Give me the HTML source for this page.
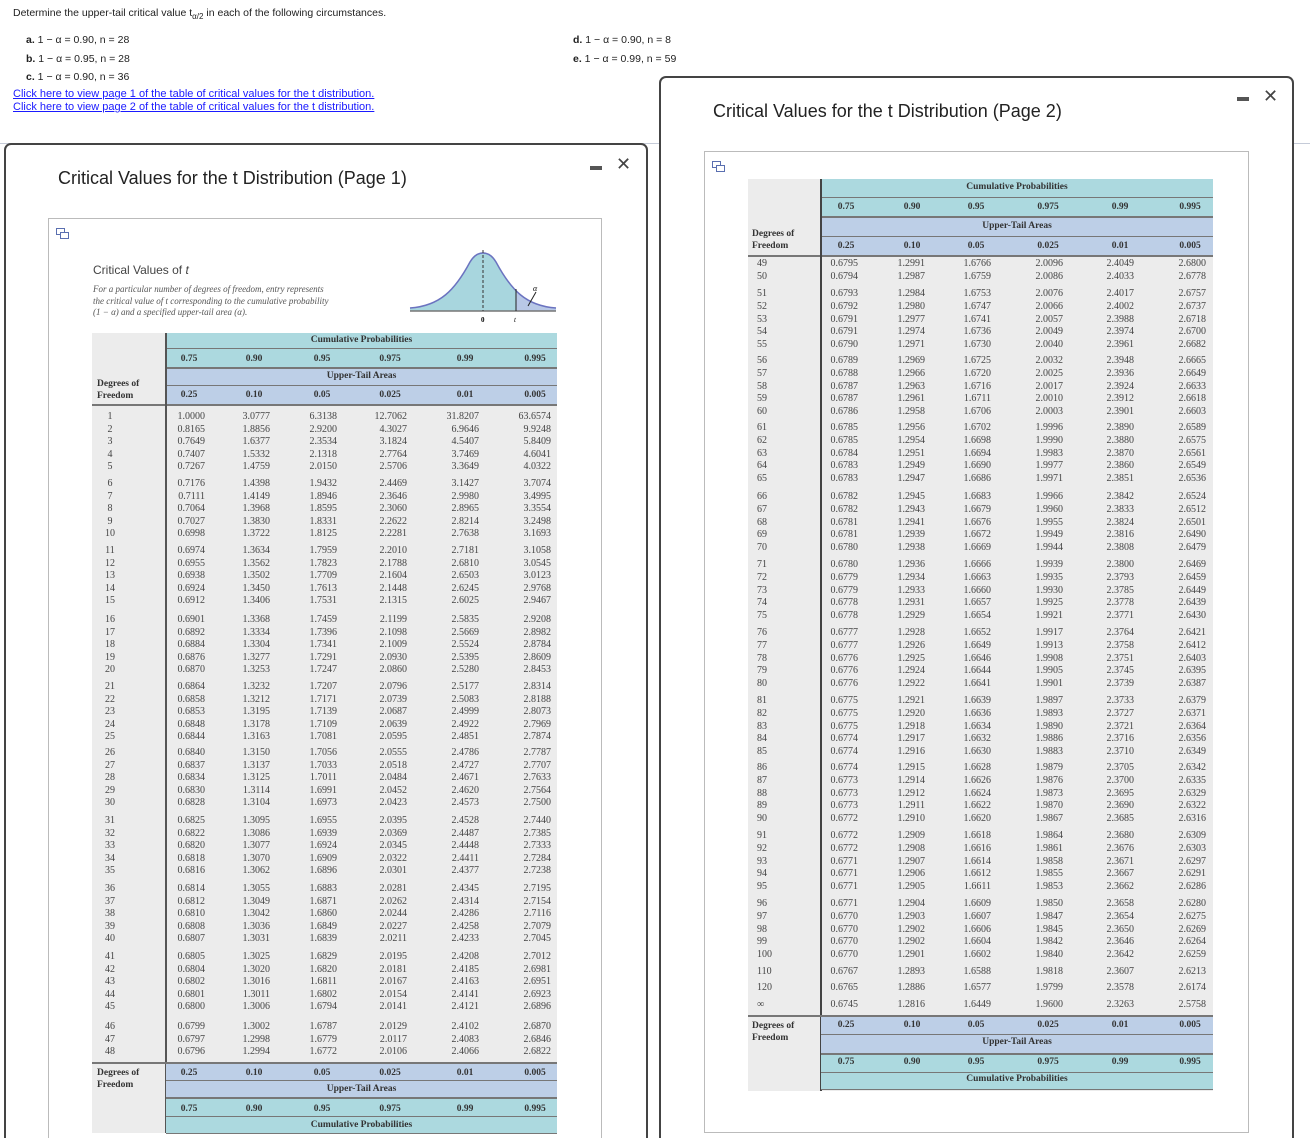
<!DOCTYPE html>
<html><head><meta charset="utf-8"><style>
*{margin:0;padding:0;box-sizing:border-box}
html{width:1310px;height:1138px;overflow:hidden}
body{width:1310px;height:1138px;overflow:hidden;background:#fff;position:relative;font-family:"Liberation Sans",sans-serif;color:#222}
.a{position:absolute}
.q{font-size:10.5px;white-space:nowrap}
.q b{font-weight:bold}
.lnk{color:#1a1aff;text-decoration:underline;font-size:11px}
.win{position:absolute;border:2px solid #444;border-bottom:0;border-radius:7px 7px 0 0;background:#fff}
.ttl{position:absolute;font-size:18px;color:#222;white-space:nowrap}
.ctl{position:absolute;font-size:18px;color:#444}
.ib{position:absolute;border:1px solid #bbb;background:#fff}
.ser{font-family:"Liberation Serif",serif;color:#333}
.band{position:absolute}
.teal{background:#acd9df}
.blu{background:#bdcfe7}
.hl{position:absolute;height:2px;background:#777}
.h{position:absolute;font-family:"Liberation Serif",serif;font-weight:bold;font-size:9.5px;color:#333;text-align:center;white-space:nowrap}
.g{position:absolute;font-family:"Liberation Serif",serif;font-size:10px;color:#444;line-height:12.55px}
.g div{display:flex;height:12.55px;white-space:nowrap}
.g i{font-style:normal;text-align:center;width:40px}
.g b{font-weight:normal;text-align:right}
.p1 b:nth-child(2){width:75px}.p1 b:nth-child(3){width:65px}.p1 b:nth-child(4){width:67px}.p1 b:nth-child(5){width:70px}.p1 b:nth-child(6){width:72px}.p1 b:nth-child(7){width:72px}
.p2{line-height:12.75px}.p2 div{height:12.75px}
.p2 i{width:73px;text-align:left;padding-left:9px}
.p2 b:nth-child(2){width:37px}.p2 b:nth-child(3){width:67px}.p2 b:nth-child(4){width:66px}.p2 b:nth-child(5){width:72px}.p2 b:nth-child(6){width:71px}.p2 b:nth-child(7){width:72px}
.ico{position:absolute;width:9px;height:7px;border:1.5px solid #5a6fb0}
.ico:after{content:"";position:absolute;left:3px;top:3px;width:7px;height:5px;border:1px solid #5a6fb0;background:#fff}
</style></head><body>

<div class="a q" style="left:13px;top:7px">Determine the upper-tail critical value t<sub style="font-size:8px">α/2</sub> in each of the following circumstances.</div>
<div class="a q" style="left:26px;top:34px"><b>a.</b> 1 − α = 0.90, n = 28</div>
<div class="a q" style="left:26px;top:53px"><b>b.</b> 1 − α = 0.95, n = 28</div>
<div class="a q" style="left:26px;top:71px"><b>c.</b> 1 − α = 0.90, n = 36</div>
<div class="a q" style="left:573px;top:34px"><b>d.</b> 1 − α = 0.90, n = 8</div>
<div class="a q" style="left:573px;top:53px"><b>e.</b> 1 − α = 0.99, n = 59</div>
<div class="a lnk" style="left:13px;top:88px">Click here to view page 1 of the table of critical values for the t distribution.</div>
<div class="a lnk" style="left:13px;top:101px">Click here to view page 2 of the table of critical values for the t distribution.</div>

<div class="a" style="left:0;top:143px;width:1310px;height:1px;background:#c5cbd8"></div>

<!-- Page 1 window -->
<div class="win" style="left:4px;top:143px;width:644px;height:995px"></div>
<div class="ttl" style="left:58px;top:168px">Critical Values for the t Distribution (Page 1)</div>
<div class="a" style="left:590px;top:166px;width:12px;height:4px;background:#555"></div>
<div class="ctl" style="left:616px;top:154px">✕</div>
<div class="ib" style="left:48px;top:218px;width:554px;height:920px;border-bottom:0"></div>
<div class="ico" style="left:56px;top:228px"></div>

<div class="a" style="left:93px;top:263px;font-size:12px;color:#444">Critical Values of <i>t</i></div>
<div class="a ser" style="left:93px;top:284px;font-size:9px;font-style:italic;line-height:11.5px;color:#555">For a particular number of degrees of freedom, entry represents<br>the critical value of t corresponding to the cumulative probability<br>(1 − α) and a specified upper-tail area (α).</div>
<svg class="a" style="left:405px;top:245px" width="160" height="85" viewBox="405 245 160 85">
<path d="M410 308 C440 306 455 290 470 262 C477 250 489 250 496 262 C511 290 526 306 556 308 L556 311 L410 311 Z" fill="#a8d6de"/>
<path d="M516 290 C528 302 540 307 556 308 L556 311 L516 311 Z" fill="#b8c8e6"/>
<path d="M410 308 C440 306 455 290 470 262 C477 250 489 250 496 262 C511 290 526 306 556 308" fill="none" stroke="#6b73c0" stroke-width="1.5"/>
<line x1="410" y1="311" x2="556" y2="311" stroke="#777" stroke-width="1.5"/>
<line x1="483" y1="250" x2="483" y2="311" stroke="#333" stroke-dasharray="3,2"/>
<line x1="516" y1="289" x2="516" y2="311" stroke="#222"/>
<line x1="528" y1="306" x2="536" y2="292" stroke="#222"/>
<text x="533" y="291" font-size="8" font-style="italic" font-family="Liberation Serif">α</text>
<text x="481" y="322" font-size="7" font-family="Liberation Serif" font-weight="bold">0</text>
<text x="514" y="322" font-size="7" font-style="italic" font-family="Liberation Serif">t</text>
</svg>

<div class="band" style="left:92px;top:333px;width:465px;height:800px;background:#ececec"></div>
<div class="band teal" style="left:166px;top:333px;width:391px;height:34px"></div>
<div class="band blu" style="left:166px;top:368px;width:391px;height:37px"></div>
<div class="hl" style="left:166px;top:348px;width:391px;height:1px"></div>
<div class="hl" style="left:166px;top:367px;width:391px"></div>
<div class="hl" style="left:166px;top:385px;width:391px;height:1px"></div>
<div class="hl" style="left:92px;top:404px;width:465px"></div>
<div class="a" style="left:165px;top:333px;width:2px;height:800px;background:#555"></div>
<div class="h" style="left:166px;top:335px;width:391px">Cumulative Probabilities</div>
<div class="h" style="left:166px;top:371px;width:391px">Upper-Tail Areas</div>
<div class="h" style="left:97px;top:378px;text-align:left;line-height:12px">Degrees of<br>Freedom</div>
<div class="h" style="left:159px;top:354px;width:60px">0.75</div><div class="h" style="left:224px;top:354px;width:60px">0.90</div><div class="h" style="left:292px;top:354px;width:60px">0.95</div><div class="h" style="left:360px;top:354px;width:60px">0.975</div><div class="h" style="left:435px;top:354px;width:60px">0.99</div><div class="h" style="left:505px;top:354px;width:60px">0.995</div>
<div class="h" style="left:159px;top:390px;width:60px">0.25</div><div class="h" style="left:224px;top:390px;width:60px">0.10</div><div class="h" style="left:292px;top:390px;width:60px">0.05</div><div class="h" style="left:360px;top:390px;width:60px">0.025</div><div class="h" style="left:435px;top:390px;width:60px">0.01</div><div class="h" style="left:505px;top:390px;width:60px">0.005</div>

<div class="g p1" style="left:90px;top:411px"><div><i>1</i><b>1.0000</b><b>3.0777</b><b>6.3138</b><b>12.7062</b><b>31.8207</b><b>63.6574</b></div><div><i>2</i><b>0.8165</b><b>1.8856</b><b>2.9200</b><b>4.3027</b><b>6.9646</b><b>9.9248</b></div><div><i>3</i><b>0.7649</b><b>1.6377</b><b>2.3534</b><b>3.1824</b><b>4.5407</b><b>5.8409</b></div><div><i>4</i><b>0.7407</b><b>1.5332</b><b>2.1318</b><b>2.7764</b><b>3.7469</b><b>4.6041</b></div><div><i>5</i><b>0.7267</b><b>1.4759</b><b>2.0150</b><b>2.5706</b><b>3.3649</b><b>4.0322</b></div></div>
<div class="g p1" style="left:90px;top:478px"><div><i>6</i><b>0.7176</b><b>1.4398</b><b>1.9432</b><b>2.4469</b><b>3.1427</b><b>3.7074</b></div><div><i>7</i><b>0.7111</b><b>1.4149</b><b>1.8946</b><b>2.3646</b><b>2.9980</b><b>3.4995</b></div><div><i>8</i><b>0.7064</b><b>1.3968</b><b>1.8595</b><b>2.3060</b><b>2.8965</b><b>3.3554</b></div><div><i>9</i><b>0.7027</b><b>1.3830</b><b>1.8331</b><b>2.2622</b><b>2.8214</b><b>3.2498</b></div><div><i>10</i><b>0.6998</b><b>1.3722</b><b>1.8125</b><b>2.2281</b><b>2.7638</b><b>3.1693</b></div></div>
<div class="g p1" style="left:90px;top:545px"><div><i>11</i><b>0.6974</b><b>1.3634</b><b>1.7959</b><b>2.2010</b><b>2.7181</b><b>3.1058</b></div><div><i>12</i><b>0.6955</b><b>1.3562</b><b>1.7823</b><b>2.1788</b><b>2.6810</b><b>3.0545</b></div><div><i>13</i><b>0.6938</b><b>1.3502</b><b>1.7709</b><b>2.1604</b><b>2.6503</b><b>3.0123</b></div><div><i>14</i><b>0.6924</b><b>1.3450</b><b>1.7613</b><b>2.1448</b><b>2.6245</b><b>2.9768</b></div><div><i>15</i><b>0.6912</b><b>1.3406</b><b>1.7531</b><b>2.1315</b><b>2.6025</b><b>2.9467</b></div></div>
<div class="g p1" style="left:90px;top:614px"><div><i>16</i><b>0.6901</b><b>1.3368</b><b>1.7459</b><b>2.1199</b><b>2.5835</b><b>2.9208</b></div><div><i>17</i><b>0.6892</b><b>1.3334</b><b>1.7396</b><b>2.1098</b><b>2.5669</b><b>2.8982</b></div><div><i>18</i><b>0.6884</b><b>1.3304</b><b>1.7341</b><b>2.1009</b><b>2.5524</b><b>2.8784</b></div><div><i>19</i><b>0.6876</b><b>1.3277</b><b>1.7291</b><b>2.0930</b><b>2.5395</b><b>2.8609</b></div><div><i>20</i><b>0.6870</b><b>1.3253</b><b>1.7247</b><b>2.0860</b><b>2.5280</b><b>2.8453</b></div></div>
<div class="g p1" style="left:90px;top:681px"><div><i>21</i><b>0.6864</b><b>1.3232</b><b>1.7207</b><b>2.0796</b><b>2.5177</b><b>2.8314</b></div><div><i>22</i><b>0.6858</b><b>1.3212</b><b>1.7171</b><b>2.0739</b><b>2.5083</b><b>2.8188</b></div><div><i>23</i><b>0.6853</b><b>1.3195</b><b>1.7139</b><b>2.0687</b><b>2.4999</b><b>2.8073</b></div><div><i>24</i><b>0.6848</b><b>1.3178</b><b>1.7109</b><b>2.0639</b><b>2.4922</b><b>2.7969</b></div><div><i>25</i><b>0.6844</b><b>1.3163</b><b>1.7081</b><b>2.0595</b><b>2.4851</b><b>2.7874</b></div></div>
<div class="g p1" style="left:90px;top:747px"><div><i>26</i><b>0.6840</b><b>1.3150</b><b>1.7056</b><b>2.0555</b><b>2.4786</b><b>2.7787</b></div><div><i>27</i><b>0.6837</b><b>1.3137</b><b>1.7033</b><b>2.0518</b><b>2.4727</b><b>2.7707</b></div><div><i>28</i><b>0.6834</b><b>1.3125</b><b>1.7011</b><b>2.0484</b><b>2.4671</b><b>2.7633</b></div><div><i>29</i><b>0.6830</b><b>1.3114</b><b>1.6991</b><b>2.0452</b><b>2.4620</b><b>2.7564</b></div><div><i>30</i><b>0.6828</b><b>1.3104</b><b>1.6973</b><b>2.0423</b><b>2.4573</b><b>2.7500</b></div></div>
<div class="g p1" style="left:90px;top:815px"><div><i>31</i><b>0.6825</b><b>1.3095</b><b>1.6955</b><b>2.0395</b><b>2.4528</b><b>2.7440</b></div><div><i>32</i><b>0.6822</b><b>1.3086</b><b>1.6939</b><b>2.0369</b><b>2.4487</b><b>2.7385</b></div><div><i>33</i><b>0.6820</b><b>1.3077</b><b>1.6924</b><b>2.0345</b><b>2.4448</b><b>2.7333</b></div><div><i>34</i><b>0.6818</b><b>1.3070</b><b>1.6909</b><b>2.0322</b><b>2.4411</b><b>2.7284</b></div><div><i>35</i><b>0.6816</b><b>1.3062</b><b>1.6896</b><b>2.0301</b><b>2.4377</b><b>2.7238</b></div></div>
<div class="g p1" style="left:90px;top:883px"><div><i>36</i><b>0.6814</b><b>1.3055</b><b>1.6883</b><b>2.0281</b><b>2.4345</b><b>2.7195</b></div><div><i>37</i><b>0.6812</b><b>1.3049</b><b>1.6871</b><b>2.0262</b><b>2.4314</b><b>2.7154</b></div><div><i>38</i><b>0.6810</b><b>1.3042</b><b>1.6860</b><b>2.0244</b><b>2.4286</b><b>2.7116</b></div><div><i>39</i><b>0.6808</b><b>1.3036</b><b>1.6849</b><b>2.0227</b><b>2.4258</b><b>2.7079</b></div><div><i>40</i><b>0.6807</b><b>1.3031</b><b>1.6839</b><b>2.0211</b><b>2.4233</b><b>2.7045</b></div></div>
<div class="g p1" style="left:90px;top:951px"><div><i>41</i><b>0.6805</b><b>1.3025</b><b>1.6829</b><b>2.0195</b><b>2.4208</b><b>2.7012</b></div><div><i>42</i><b>0.6804</b><b>1.3020</b><b>1.6820</b><b>2.0181</b><b>2.4185</b><b>2.6981</b></div><div><i>43</i><b>0.6802</b><b>1.3016</b><b>1.6811</b><b>2.0167</b><b>2.4163</b><b>2.6951</b></div><div><i>44</i><b>0.6801</b><b>1.3011</b><b>1.6802</b><b>2.0154</b><b>2.4141</b><b>2.6923</b></div><div><i>45</i><b>0.6800</b><b>1.3006</b><b>1.6794</b><b>2.0141</b><b>2.4121</b><b>2.6896</b></div></div>
<div class="g p1" style="left:90px;top:1021px"><div><i>46</i><b>0.6799</b><b>1.3002</b><b>1.6787</b><b>2.0129</b><b>2.4102</b><b>2.6870</b></div><div><i>47</i><b>0.6797</b><b>1.2998</b><b>1.6779</b><b>2.0117</b><b>2.4083</b><b>2.6846</b></div><div><i>48</i><b>0.6796</b><b>1.2994</b><b>1.6772</b><b>2.0106</b><b>2.4066</b><b>2.6822</b></div></div>

<div class="band blu" style="left:166px;top:1063px;width:391px;height:34px"></div>
<div class="band teal" style="left:166px;top:1098px;width:391px;height:36px"></div>
<div class="hl" style="left:92px;top:1062px;width:465px"></div>
<div class="hl" style="left:166px;top:1080px;width:391px;height:1px"></div>
<div class="hl" style="left:166px;top:1097px;width:391px"></div>
<div class="hl" style="left:166px;top:1116px;width:391px;height:1px"></div>
<div class="hl" style="left:166px;top:1133px;width:391px;height:1px"></div>
<div class="h" style="left:97px;top:1067px;text-align:left;line-height:12px">Degrees of<br>Freedom</div>
<div class="h" style="left:159px;top:1068px;width:60px">0.25</div><div class="h" style="left:224px;top:1068px;width:60px">0.10</div><div class="h" style="left:292px;top:1068px;width:60px">0.05</div><div class="h" style="left:360px;top:1068px;width:60px">0.025</div><div class="h" style="left:435px;top:1068px;width:60px">0.01</div><div class="h" style="left:505px;top:1068px;width:60px">0.005</div>
<div class="h" style="left:166px;top:1084px;width:391px">Upper-Tail Areas</div>
<div class="h" style="left:159px;top:1104px;width:60px">0.75</div><div class="h" style="left:224px;top:1104px;width:60px">0.90</div><div class="h" style="left:292px;top:1104px;width:60px">0.95</div><div class="h" style="left:360px;top:1104px;width:60px">0.975</div><div class="h" style="left:435px;top:1104px;width:60px">0.99</div><div class="h" style="left:505px;top:1104px;width:60px">0.995</div>
<div class="h" style="left:166px;top:1120px;width:391px">Cumulative Probabilities</div>

<!-- Page 2 window -->
<div class="win" style="left:659px;top:76px;width:635px;height:1062px"></div>
<div class="ttl" style="left:713px;top:101px">Critical Values for the t Distribution (Page 2)</div>
<div class="a" style="left:1237px;top:97px;width:12px;height:4px;background:#555"></div>
<div class="ctl" style="left:1263px;top:86px">✕</div>
<div class="ib" style="left:704px;top:151px;width:545px;height:982px"></div>
<div class="ico" style="left:712px;top:161px"></div>

<div class="band" style="left:748px;top:179px;width:465px;height:912px;background:#ececec"></div>
<div class="band teal" style="left:821px;top:179px;width:392px;height:38px"></div>
<div class="band blu" style="left:821px;top:217px;width:392px;height:39px"></div>
<div class="hl" style="left:821px;top:197px;width:392px;height:1px"></div>
<div class="hl" style="left:821px;top:216px;width:392px"></div>
<div class="hl" style="left:821px;top:236px;width:392px;height:1px"></div>
<div class="hl" style="left:748px;top:255px;width:465px"></div>
<div class="a" style="left:820px;top:179px;width:2px;height:912px;background:#444"></div>
<div class="h" style="left:821px;top:182px;width:392px">Cumulative Probabilities</div>
<div class="h" style="left:821px;top:221px;width:392px">Upper-Tail Areas</div>
<div class="h" style="left:752px;top:228px;text-align:left;line-height:12px">Degrees of<br>Freedom</div>
<div class="h" style="left:816px;top:202px;width:60px">0.75</div><div class="h" style="left:882px;top:202px;width:60px">0.90</div><div class="h" style="left:946px;top:202px;width:60px">0.95</div><div class="h" style="left:1018px;top:202px;width:60px">0.975</div><div class="h" style="left:1090px;top:202px;width:60px">0.99</div><div class="h" style="left:1160px;top:202px;width:60px">0.995</div>
<div class="h" style="left:816px;top:241px;width:60px">0.25</div><div class="h" style="left:882px;top:241px;width:60px">0.10</div><div class="h" style="left:946px;top:241px;width:60px">0.05</div><div class="h" style="left:1018px;top:241px;width:60px">0.025</div><div class="h" style="left:1090px;top:241px;width:60px">0.01</div><div class="h" style="left:1160px;top:241px;width:60px">0.005</div>

<div class="g p2" style="left:748px;top:258px"><div><i>49</i><b>0.6795</b><b>1.2991</b><b>1.6766</b><b>2.0096</b><b>2.4049</b><b>2.6800</b></div><div><i>50</i><b>0.6794</b><b>1.2987</b><b>1.6759</b><b>2.0086</b><b>2.4033</b><b>2.6778</b></div></div>
<div class="g p2" style="left:748px;top:288px"><div><i>51</i><b>0.6793</b><b>1.2984</b><b>1.6753</b><b>2.0076</b><b>2.4017</b><b>2.6757</b></div><div><i>52</i><b>0.6792</b><b>1.2980</b><b>1.6747</b><b>2.0066</b><b>2.4002</b><b>2.6737</b></div><div><i>53</i><b>0.6791</b><b>1.2977</b><b>1.6741</b><b>2.0057</b><b>2.3988</b><b>2.6718</b></div><div><i>54</i><b>0.6791</b><b>1.2974</b><b>1.6736</b><b>2.0049</b><b>2.3974</b><b>2.6700</b></div><div><i>55</i><b>0.6790</b><b>1.2971</b><b>1.6730</b><b>2.0040</b><b>2.3961</b><b>2.6682</b></div></div>
<div class="g p2" style="left:748px;top:355px"><div><i>56</i><b>0.6789</b><b>1.2969</b><b>1.6725</b><b>2.0032</b><b>2.3948</b><b>2.6665</b></div><div><i>57</i><b>0.6788</b><b>1.2966</b><b>1.6720</b><b>2.0025</b><b>2.3936</b><b>2.6649</b></div><div><i>58</i><b>0.6787</b><b>1.2963</b><b>1.6716</b><b>2.0017</b><b>2.3924</b><b>2.6633</b></div><div><i>59</i><b>0.6787</b><b>1.2961</b><b>1.6711</b><b>2.0010</b><b>2.3912</b><b>2.6618</b></div><div><i>60</i><b>0.6786</b><b>1.2958</b><b>1.6706</b><b>2.0003</b><b>2.3901</b><b>2.6603</b></div></div>
<div class="g p2" style="left:748px;top:422px"><div><i>61</i><b>0.6785</b><b>1.2956</b><b>1.6702</b><b>1.9996</b><b>2.3890</b><b>2.6589</b></div><div><i>62</i><b>0.6785</b><b>1.2954</b><b>1.6698</b><b>1.9990</b><b>2.3880</b><b>2.6575</b></div><div><i>63</i><b>0.6784</b><b>1.2951</b><b>1.6694</b><b>1.9983</b><b>2.3870</b><b>2.6561</b></div><div><i>64</i><b>0.6783</b><b>1.2949</b><b>1.6690</b><b>1.9977</b><b>2.3860</b><b>2.6549</b></div><div><i>65</i><b>0.6783</b><b>1.2947</b><b>1.6686</b><b>1.9971</b><b>2.3851</b><b>2.6536</b></div></div>
<div class="g p2" style="left:748px;top:491px"><div><i>66</i><b>0.6782</b><b>1.2945</b><b>1.6683</b><b>1.9966</b><b>2.3842</b><b>2.6524</b></div><div><i>67</i><b>0.6782</b><b>1.2943</b><b>1.6679</b><b>1.9960</b><b>2.3833</b><b>2.6512</b></div><div><i>68</i><b>0.6781</b><b>1.2941</b><b>1.6676</b><b>1.9955</b><b>2.3824</b><b>2.6501</b></div><div><i>69</i><b>0.6781</b><b>1.2939</b><b>1.6672</b><b>1.9949</b><b>2.3816</b><b>2.6490</b></div><div><i>70</i><b>0.6780</b><b>1.2938</b><b>1.6669</b><b>1.9944</b><b>2.3808</b><b>2.6479</b></div></div>
<div class="g p2" style="left:748px;top:559px"><div><i>71</i><b>0.6780</b><b>1.2936</b><b>1.6666</b><b>1.9939</b><b>2.3800</b><b>2.6469</b></div><div><i>72</i><b>0.6779</b><b>1.2934</b><b>1.6663</b><b>1.9935</b><b>2.3793</b><b>2.6459</b></div><div><i>73</i><b>0.6779</b><b>1.2933</b><b>1.6660</b><b>1.9930</b><b>2.3785</b><b>2.6449</b></div><div><i>74</i><b>0.6778</b><b>1.2931</b><b>1.6657</b><b>1.9925</b><b>2.3778</b><b>2.6439</b></div><div><i>75</i><b>0.6778</b><b>1.2929</b><b>1.6654</b><b>1.9921</b><b>2.3771</b><b>2.6430</b></div></div>
<div class="g p2" style="left:748px;top:627px"><div><i>76</i><b>0.6777</b><b>1.2928</b><b>1.6652</b><b>1.9917</b><b>2.3764</b><b>2.6421</b></div><div><i>77</i><b>0.6777</b><b>1.2926</b><b>1.6649</b><b>1.9913</b><b>2.3758</b><b>2.6412</b></div><div><i>78</i><b>0.6776</b><b>1.2925</b><b>1.6646</b><b>1.9908</b><b>2.3751</b><b>2.6403</b></div><div><i>79</i><b>0.6776</b><b>1.2924</b><b>1.6644</b><b>1.9905</b><b>2.3745</b><b>2.6395</b></div><div><i>80</i><b>0.6776</b><b>1.2922</b><b>1.6641</b><b>1.9901</b><b>2.3739</b><b>2.6387</b></div></div>
<div class="g p2" style="left:748px;top:695px"><div><i>81</i><b>0.6775</b><b>1.2921</b><b>1.6639</b><b>1.9897</b><b>2.3733</b><b>2.6379</b></div><div><i>82</i><b>0.6775</b><b>1.2920</b><b>1.6636</b><b>1.9893</b><b>2.3727</b><b>2.6371</b></div><div><i>83</i><b>0.6775</b><b>1.2918</b><b>1.6634</b><b>1.9890</b><b>2.3721</b><b>2.6364</b></div><div><i>84</i><b>0.6774</b><b>1.2917</b><b>1.6632</b><b>1.9886</b><b>2.3716</b><b>2.6356</b></div><div><i>85</i><b>0.6774</b><b>1.2916</b><b>1.6630</b><b>1.9883</b><b>2.3710</b><b>2.6349</b></div></div>
<div class="g p2" style="left:748px;top:762px"><div><i>86</i><b>0.6774</b><b>1.2915</b><b>1.6628</b><b>1.9879</b><b>2.3705</b><b>2.6342</b></div><div><i>87</i><b>0.6773</b><b>1.2914</b><b>1.6626</b><b>1.9876</b><b>2.3700</b><b>2.6335</b></div><div><i>88</i><b>0.6773</b><b>1.2912</b><b>1.6624</b><b>1.9873</b><b>2.3695</b><b>2.6329</b></div><div><i>89</i><b>0.6773</b><b>1.2911</b><b>1.6622</b><b>1.9870</b><b>2.3690</b><b>2.6322</b></div><div><i>90</i><b>0.6772</b><b>1.2910</b><b>1.6620</b><b>1.9867</b><b>2.3685</b><b>2.6316</b></div></div>
<div class="g p2" style="left:748px;top:830px"><div><i>91</i><b>0.6772</b><b>1.2909</b><b>1.6618</b><b>1.9864</b><b>2.3680</b><b>2.6309</b></div><div><i>92</i><b>0.6772</b><b>1.2908</b><b>1.6616</b><b>1.9861</b><b>2.3676</b><b>2.6303</b></div><div><i>93</i><b>0.6771</b><b>1.2907</b><b>1.6614</b><b>1.9858</b><b>2.3671</b><b>2.6297</b></div><div><i>94</i><b>0.6771</b><b>1.2906</b><b>1.6612</b><b>1.9855</b><b>2.3667</b><b>2.6291</b></div><div><i>95</i><b>0.6771</b><b>1.2905</b><b>1.6611</b><b>1.9853</b><b>2.3662</b><b>2.6286</b></div></div>
<div class="g p2" style="left:748px;top:898px"><div><i>96</i><b>0.6771</b><b>1.2904</b><b>1.6609</b><b>1.9850</b><b>2.3658</b><b>2.6280</b></div><div><i>97</i><b>0.6770</b><b>1.2903</b><b>1.6607</b><b>1.9847</b><b>2.3654</b><b>2.6275</b></div><div><i>98</i><b>0.6770</b><b>1.2902</b><b>1.6606</b><b>1.9845</b><b>2.3650</b><b>2.6269</b></div><div><i>99</i><b>0.6770</b><b>1.2902</b><b>1.6604</b><b>1.9842</b><b>2.3646</b><b>2.6264</b></div><div><i>100</i><b>0.6770</b><b>1.2901</b><b>1.6602</b><b>1.9840</b><b>2.3642</b><b>2.6259</b></div></div>
<div class="g p2" style="left:748px;top:966px"><div><i>110</i><b>0.6767</b><b>1.2893</b><b>1.6588</b><b>1.9818</b><b>2.3607</b><b>2.6213</b></div></div>
<div class="g p2" style="left:748px;top:982px"><div><i>120</i><b>0.6765</b><b>1.2886</b><b>1.6577</b><b>1.9799</b><b>2.3578</b><b>2.6174</b></div></div>
<div class="g p2" style="left:748px;top:999px"><div><i>∞</i><b>0.6745</b><b>1.2816</b><b>1.6449</b><b>1.9600</b><b>2.3263</b><b>2.5758</b></div></div>

<div class="band blu" style="left:821px;top:1016px;width:392px;height:37px"></div>
<div class="band teal" style="left:821px;top:1054px;width:392px;height:36px"></div>
<div class="hl" style="left:748px;top:1015px;width:465px"></div>
<div class="hl" style="left:821px;top:1034px;width:392px;height:1px"></div>
<div class="hl" style="left:821px;top:1053px;width:392px"></div>
<div class="hl" style="left:821px;top:1072px;width:392px;height:1px"></div>
<div class="hl" style="left:821px;top:1089px;width:392px;height:1px"></div>
<div class="h" style="left:752px;top:1020px;text-align:left;line-height:12px">Degrees of<br>Freedom</div>
<div class="h" style="left:816px;top:1020px;width:60px">0.25</div><div class="h" style="left:882px;top:1020px;width:60px">0.10</div><div class="h" style="left:946px;top:1020px;width:60px">0.05</div><div class="h" style="left:1018px;top:1020px;width:60px">0.025</div><div class="h" style="left:1090px;top:1020px;width:60px">0.01</div><div class="h" style="left:1160px;top:1020px;width:60px">0.005</div>
<div class="h" style="left:821px;top:1037px;width:392px">Upper-Tail Areas</div>
<div class="h" style="left:816px;top:1057px;width:60px">0.75</div><div class="h" style="left:882px;top:1057px;width:60px">0.90</div><div class="h" style="left:946px;top:1057px;width:60px">0.95</div><div class="h" style="left:1018px;top:1057px;width:60px">0.975</div><div class="h" style="left:1090px;top:1057px;width:60px">0.99</div><div class="h" style="left:1160px;top:1057px;width:60px">0.995</div>
<div class="h" style="left:821px;top:1074px;width:392px">Cumulative Probabilities</div>
</body></html>
